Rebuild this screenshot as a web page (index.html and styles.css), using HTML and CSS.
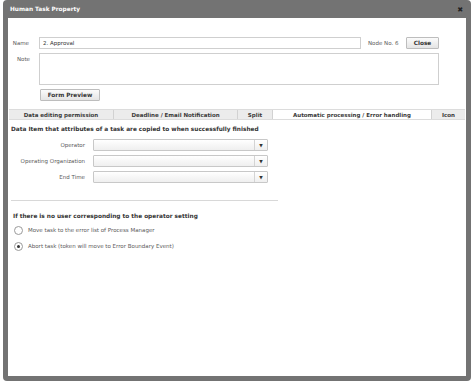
FILE: index.html
```html
<!DOCTYPE html>
<html lang="en">
<head>
    <meta charset="UTF-8">
    <title>Human Task Property</title>
    <link rel="stylesheet" href="styles.css">
</head>
<body>

    <div class="dialog">
        <div class="dialog-title">
            <span>Human Task Property</span>
            <span class="dialog-x">&#x2716;</span>
        </div>

        <div class="dialog-body">
            <div class="field-row">
                <label class="field-label">Name</label>
                <input class="text-input name-input" type="text" value="2. Approval">
                <span class="node-no">Node No. 6</span>
                <button class="btn">Close</button>
            </div>
            <div class="field-row note-row">
                <label class="field-label note-label">Note</label>
                <textarea class="text-input note-input"></textarea>
            </div>
            <div class="preview-row">
                <button class="btn preview-btn">Form Preview</button>
            </div>

            <div class="tabs">
                <div class="tab tab-1">Data editing permission</div>
                <div class="tab tab-2">Deadline / Email Notification</div>
                <div class="tab tab-3">Split</div>
                <div class="tab tab-4 active">Automatic processing / Error handling</div>
                <div class="tab tab-5">Icon</div>
            </div>

            <div class="tab-panel">
                <div class="section-title">Data Item that attributes of a task are copied to when successfully finished</div>

                <div class="select-row">
                    <span class="select-label">Operator</span>
                    <div class="select-box"><span class="select-arrow">&#9660;</span></div>
                </div>
                <div class="select-row">
                    <span class="select-label">Operating Organization</span>
                    <div class="select-box"><span class="select-arrow">&#9660;</span></div>
                </div>
                <div class="select-row">
                    <span class="select-label">End Time</span>
                    <div class="select-box"><span class="select-arrow">&#9660;</span></div>
                </div>

                <div class="divider"></div>

                <div class="section-title second">If there is no user corresponding to the operator setting</div>

                <div class="radio-row">
                    <span class="radio"></span>
                    <span>Move task to the error list of Process Manager</span>
                </div>
                <div class="radio-row">
                    <span class="radio checked"></span>
                    <span>Abort task (token will move to Error Boundary Event)</span>
                </div>
            </div>
        </div>
    </div>

</body>
</html>
```

FILE: styles.css
```css
:root {
    --frame: #737373;
    --border: #cfcfcf;
    --label: #5a5a5a;
    --text: #333;
    --tab-bg: #ececec;
}

* {
    box-sizing: border-box;
    margin: 0;
    padding: 0;
}

body {
    font-family: "DejaVu Sans", Verdana, sans-serif;
    font-size: 5.5px;
    color: var(--text);
    background: #fff;
    width: 474px;
    height: 384px;
}

.dialog {
    margin-left: 3px;
    width: 468px;
    height: 381px;
    background: var(--frame);
    border-radius: 4px;
    padding: 0 5px 5px 5px;
    display: flex;
    flex-direction: column;
}

.dialog-title {
    height: 18px;
    display: flex;
    align-items: center;
    justify-content: space-between;
    color: #fff;
    font-weight: bold;
    font-size: 5.8px;
    padding: 0 3px 0 2px;
}

.dialog-x {
    color: #222;
    font-size: 7px;
    margin-top: 1px;
}

.dialog-body {
    flex: 1;
    background: #fff;
    padding-top: 19px;
}

.field-row {
    display: flex;
    align-items: center;
    height: 12px;
}

.field-label {
    width: 31px;
    padding-right: 10px;
    text-align: right;
    color: var(--label);
}

.text-input {
    border: 1px solid var(--border);
    font: inherit;
    color: var(--text);
    padding: 0 3px;
    outline: none;
    resize: none;
}

.name-input {
    width: 322px;
    height: 12px;
}

.node-no {
    color: var(--label);
    margin-left: 7px;
    width: 38px;
}

.btn {
    font-family: inherit;
    font-size: 5.8px;
    font-weight: bold;
    color: #333;
    background: linear-gradient(#fbfbfb, #e4e4e4);
    border: 1px solid #bdbdbd;
    border-radius: 1px;
    height: 12px;
    width: 33px;
}

.note-row {
    margin-top: 4px;
    height: 32px;
    align-items: flex-start;
}

.note-label {
    padding-top: 3px;
    padding-right: 9px;
}

.note-input {
    width: 400px;
    height: 32px;
}

.preview-row {
    margin-top: 4px;
    padding-left: 32px;
}

.preview-btn {
    width: 60px;
}

.tabs {
    display: flex;
    margin: 8px 1px 0 1px;
    height: 11px;
    border-top: 1px solid #dcdcdc;
    border-bottom: 1px solid #dcdcdc;
}

.tab {
    background: var(--tab-bg);
    border-right: 1px solid #d2d2d2;
    font-weight: bold;
    font-size: 5.5px;
    display: flex;
    align-items: center;
    justify-content: center;
    color: #3a3a3a;
}

.tab-1 { width: 105px; }
.tab-2 { width: 124px; }
.tab-3 { width: 35px; }
.tab-4 { width: 159px; }
.tab-5 { width: 33px; border-right: none; }

.tab.active {
    background: #fff;
}

.tab-panel {
    padding: 4px 0 0 3px;
}

.section-title {
    font-weight: bold;
    font-size: 5.8px;
    height: 10px;
    line-height: 10px;
    margin-bottom: 5px;
}

.select-row {
    display: flex;
    align-items: center;
    height: 12px;
    margin-bottom: 4px;
}

.select-label {
    width: 74px;
    text-align: right;
    color: var(--label);
    margin-right: 8px;
}

.select-box {
    width: 175px;
    height: 12px;
    border: 1px solid #c8c8c8;
    border-radius: 1px;
    background: linear-gradient(#fff, #efefef);
    display: flex;
    justify-content: flex-end;
}

.select-arrow {
    width: 13px;
    border-left: 1px solid #d4d4d4;
    font-size: 4.5px;
    color: #333;
    display: flex;
    align-items: center;
    justify-content: center;
}

.divider {
    margin-top: 17px;
    width: 267px;
    height: 1px;
    background: #d8d8d8;
}

.section-title.second {
    margin-top: 10px;
    padding-left: 2px;
    margin-bottom: 1px;
}

.radio-row {
    display: flex;
    align-items: center;
    height: 16px;
    padding-left: 3px;
    color: var(--label);
}

.radio {
    width: 9px;
    height: 9px;
    border: 1px solid #9a9a9a;
    border-radius: 50%;
    margin-right: 5px;
    display: flex;
    align-items: center;
    justify-content: center;
    background: #fff;
}

.radio.checked::after {
    content: "";
    width: 3px;
    height: 3px;
    border-radius: 50%;
    background: #333;
}
```
